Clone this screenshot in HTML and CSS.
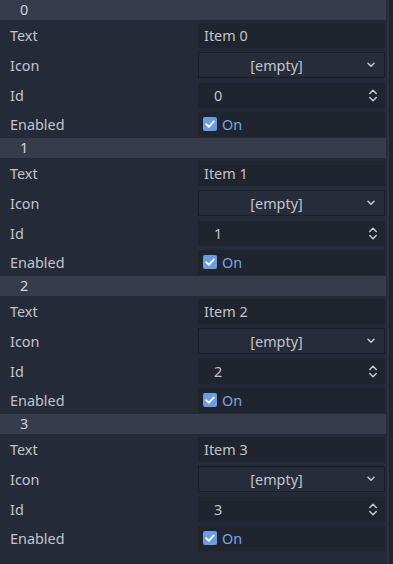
FILE: index.html
```html
<!DOCTYPE html>
<html lang="en">
<head>
    <meta charset="UTF-8">
    <meta name="viewport" content="width=device-width, initial-scale=1.0">
    <title>Inspector - Items</title>
    <link rel="stylesheet" href="styles.css">
</head>
<body>
    <div class="inspector">
        <div class="props">
            <section class="group">
                <div class="group-head">0</div>
                <div class="prop"><span class="label">Text</span><div class="field text">Item 0</div></div>
                <div class="prop"><span class="label">Icon</span><div class="field picker">[empty]<svg class="arrow" width="10" height="6" viewBox="0 0 10 6"><path d="M2 1.3 5 4.3 8 1.3"/></svg></div></div>
                <div class="prop"><span class="label">Id</span><div class="field spin">0<svg class="arrows" width="10" height="15" viewBox="0 0 10 15"><path d="M1.8 5.5 5 2.3 8.2 5.5M1.8 9.5 5 12.7 8.2 9.5"/></svg></div></div>
                <div class="prop"><span class="label">Enabled</span><div class="field check"><span class="box"><svg width="14" height="14" viewBox="0 0 14 14"><path d="M3.2 7.2 5.8 9.8 10.8 4.4"/></svg></span>On</div></div>
            </section>
            <section class="group">
                <div class="group-head">1</div>
                <div class="prop"><span class="label">Text</span><div class="field text">Item 1</div></div>
                <div class="prop"><span class="label">Icon</span><div class="field picker">[empty]<svg class="arrow" width="10" height="6" viewBox="0 0 10 6"><path d="M2 1.3 5 4.3 8 1.3"/></svg></div></div>
                <div class="prop"><span class="label">Id</span><div class="field spin">1<svg class="arrows" width="10" height="15" viewBox="0 0 10 15"><path d="M1.8 5.5 5 2.3 8.2 5.5M1.8 9.5 5 12.7 8.2 9.5"/></svg></div></div>
                <div class="prop"><span class="label">Enabled</span><div class="field check"><span class="box"><svg width="14" height="14" viewBox="0 0 14 14"><path d="M3.2 7.2 5.8 9.8 10.8 4.4"/></svg></span>On</div></div>
            </section>
            <section class="group">
                <div class="group-head">2</div>
                <div class="prop"><span class="label">Text</span><div class="field text">Item 2</div></div>
                <div class="prop"><span class="label">Icon</span><div class="field picker">[empty]<svg class="arrow" width="10" height="6" viewBox="0 0 10 6"><path d="M2 1.3 5 4.3 8 1.3"/></svg></div></div>
                <div class="prop"><span class="label">Id</span><div class="field spin">2<svg class="arrows" width="10" height="15" viewBox="0 0 10 15"><path d="M1.8 5.5 5 2.3 8.2 5.5M1.8 9.5 5 12.7 8.2 9.5"/></svg></div></div>
                <div class="prop"><span class="label">Enabled</span><div class="field check"><span class="box"><svg width="14" height="14" viewBox="0 0 14 14"><path d="M3.2 7.2 5.8 9.8 10.8 4.4"/></svg></span>On</div></div>
            </section>
            <section class="group">
                <div class="group-head">3</div>
                <div class="prop"><span class="label">Text</span><div class="field text">Item 3</div></div>
                <div class="prop"><span class="label">Icon</span><div class="field picker">[empty]<svg class="arrow" width="10" height="6" viewBox="0 0 10 6"><path d="M2 1.3 5 4.3 8 1.3"/></svg></div></div>
                <div class="prop"><span class="label">Id</span><div class="field spin">3<svg class="arrows" width="10" height="15" viewBox="0 0 10 15"><path d="M1.8 5.5 5 2.3 8.2 5.5M1.8 9.5 5 12.7 8.2 9.5"/></svg></div></div>
                <div class="prop"><span class="label">Enabled</span><div class="field check"><span class="box"><svg width="14" height="14" viewBox="0 0 14 14"><path d="M3.2 7.2 5.8 9.8 10.8 4.4"/></svg></span>On</div></div>
            </section>
        </div>
        <div class="scrollbar"></div>
    </div>
</body>
</html>
```

FILE: styles.css
```css
/* editor inspector colours */
:root {
    --panel: #252a39;
    --head: #363c4b;
    --field: #20242f;
    --picker: #272c3a;
    --picker-line: #1b1e28;
    --text: #c2c5cb;
    --accent: #7ba6e2;
    --check: #6d9ce0;
}

body {
    margin: 0;
    background: var(--panel);
    color: var(--text);
    font-family: "Noto Sans", "DejaVu Sans", sans-serif;
    font-size: 14.4px;
    overflow: hidden;
}

.inspector {
    display: flex;
    height: 564px;
}

.props {
    width: 387px;
}

/* group header: item index */
.group-head {
    height: 20px;
    line-height: 20px;
    background: var(--head);
    padding-left: 20px;
    width: 366px;
    color: #d0d3d8;
}

.prop {
    display: flex;
    align-items: center;
    height: 30px;
}

.prop:last-child {
    height: 28px;
}

.label {
    width: 188px;
    padding-left: 10px;
}

.field {
    width: 187px;
    height: 25px;
    box-sizing: border-box;
    display: flex;
    align-items: center;
    background: var(--field);
    position: relative;
}

.field.text {
    padding-left: 6px;
}

.field.picker {
    background: var(--picker);
    border: 1px solid var(--picker-line);
    height: 26px;
    justify-content: center;
    padding-right: 30px;
}

.field.spin {
    padding-left: 16px;
}

.arrow,
.arrows {
    position: absolute;
    right: 8px;
    fill: none;
    stroke: #c9ccd2;
    stroke-width: 1.5;
    stroke-linecap: round;
    stroke-linejoin: round;
}

.arrows {
    right: 7px;
}

/* checkbox */
.field.check {
    padding-left: 5px;
    color: var(--accent);
}

.box {
    width: 14px;
    height: 14px;
    border-radius: 2px;
    background: var(--check);
    margin-right: 5px;
    display: flex;
}

.box path {
    fill: none;
    stroke: #fff;
    stroke-width: 1.8;
    stroke-linecap: round;
    stroke-linejoin: round;
}

.scrollbar {
    width: 6px;
    background: #21252f;
    box-shadow: inset 2px 0 0 #2c3242;
}
```
